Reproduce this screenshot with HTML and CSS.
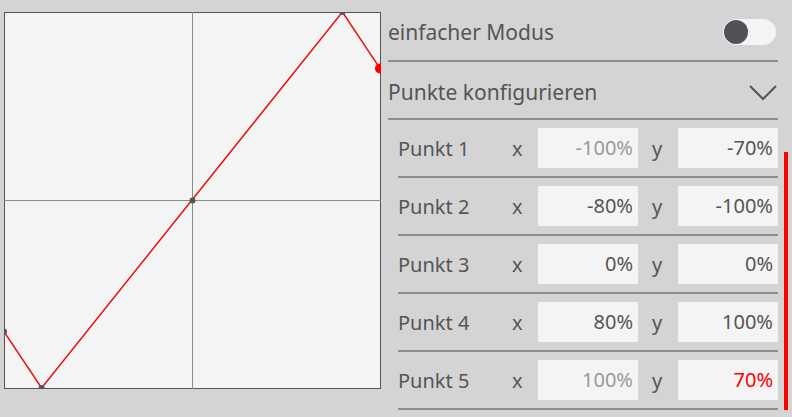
FILE: index.html
```html
<!DOCTYPE html>
<html lang="de">
<head>
    <meta charset="UTF-8">
    <meta name="viewport" content="width=device-width, initial-scale=1.0">
    <title>Kurve</title>
    <link rel="stylesheet" href="styles.css">
</head>
<body>
    <div class="page">
        <div class="chart">
            <svg width="377" height="377" viewBox="0 0 377 377">
                <rect x="0.5" y="0.5" width="376" height="376" fill="#f4f4f4" stroke="#555" />
                <line x1="188.5" y1="0" x2="188.5" y2="377" stroke="#8c8c8c" />
                <line x1="0" y1="188.5" x2="377" y2="188.5" stroke="#8c8c8c" />
                <polyline points="0,319.6 37.6,376 188,188 338.4,0 376,56.4" fill="none" stroke="#e81010" stroke-width="1.5" />
                <circle cx="0" cy="319.6" r="3" fill="#555" />
                <circle cx="37.6" cy="376" r="3" fill="#555" />
                <circle cx="188.5" cy="188.5" r="3" fill="#555" />
                <circle cx="338.4" cy="0" r="3" fill="#555" />
                <circle cx="376" cy="56.4" r="5" fill="#ff0000" />
            </svg>
        </div>

        <div class="panel">
            <div class="mode-row">
                <span>einfacher Modus</span>
                <div class="toggle"><div class="knob"></div></div>
            </div>
            <div class="section-row">
                <span>Punkte konfigurieren</span>
                <svg class="chevron" width="28" height="16" viewBox="0 0 28 16">
                    <polyline points="1,1 14,14 27,1" fill="none" stroke="#555" stroke-width="2" />
                </svg>
            </div>
            <div class="points-wrap">
                <div class="points">
                    <div class="point-row">
                        <span class="point-name">Punkt 1</span>
                        <span class="axis">x</span>
                        <div class="value disabled">-100%</div>
                        <span class="axis axis-y">y</span>
                        <div class="value">-70%</div>
                    </div>
                    <div class="point-row">
                        <span class="point-name">Punkt 2</span>
                        <span class="axis">x</span>
                        <div class="value">-80%</div>
                        <span class="axis axis-y">y</span>
                        <div class="value">-100%</div>
                    </div>
                    <div class="point-row">
                        <span class="point-name">Punkt 3</span>
                        <span class="axis">x</span>
                        <div class="value">0%</div>
                        <span class="axis axis-y">y</span>
                        <div class="value">0%</div>
                    </div>
                    <div class="point-row">
                        <span class="point-name">Punkt 4</span>
                        <span class="axis">x</span>
                        <div class="value">80%</div>
                        <span class="axis axis-y">y</span>
                        <div class="value">100%</div>
                    </div>
                    <div class="point-row">
                        <span class="point-name">Punkt 5</span>
                        <span class="axis">x</span>
                        <div class="value disabled">100%</div>
                        <span class="axis axis-y">y</span>
                        <div class="value active">70%</div>
                    </div>
                </div>
                <div class="scroll-track"><div class="scroll-thumb"></div></div>
            </div>
        </div>
    </div>
</body>
</html>
```

FILE: styles.css
```css
body {
    margin: 0;
    padding: 0;
    background-color: #d4d4d4;
    font-family: "Noto Sans", sans-serif;
    color: #555;
}
.page {
    display: flex;
    align-items: flex-start;
    width: 792px;
    height: 417px;
    overflow: hidden;
}
.chart {
    margin: 12px 0 0 4px;
    width: 377px;
    height: 377px;
}
.chart svg {
    display: block;
}
.panel {
    margin-left: 7px;
    width: 400px;
}
.mode-row {
    display: flex;
    justify-content: space-between;
    align-items: center;
    width: 390px;
    height: 56px;
    padding-top: 4px;
    border-bottom: 2px solid #8f8f8f;
    font-size: 21px;
}
.toggle {
    width: 53px;
    height: 26px;
    margin-right: 2px;
    border-radius: 13px;
    background-color: #f4f4f4;
    display: flex;
    align-items: center;
    padding-left: 1px;
    box-sizing: border-box;
}
.knob {
    width: 24px;
    height: 24px;
    border-radius: 50%;
    background-color: #555057;
}
.section-row {
    display: flex;
    justify-content: space-between;
    align-items: center;
    width: 390px;
    height: 52px;
    padding-top: 4px;
    border-bottom: 2px solid #8f8f8f;
    font-size: 21px;
}
.chevron {
    margin-right: 1px;
    margin-top: 2px;
}
.points-wrap {
    display: flex;
}
.points {
    margin-left: 10px;
    width: 380px;
}
.point-row {
    display: grid;
    grid-template-columns: 114px 26px 100px 40px 100px;
    align-items: center;
    height: 56px;
    border-bottom: 2px solid #8f8f8f;
    font-size: 20px;
}
.axis-y {
    padding-left: 14px;
}
.value {
    height: 40px;
    line-height: 40px;
    background-color: #f4f4f4;
    text-align: right;
    padding-right: 5px;
    box-sizing: border-box;
}
.value.disabled {
    color: #9a9a9a;
}
.value.active {
    color: #ff0000;
}
.scroll-track {
    margin-left: 6px;
    padding-top: 32px;
    width: 4px;
    height: 290px;
    box-sizing: border-box;
}
.scroll-thumb {
    height: 100%;
    background-color: #ff0000;
}
```
